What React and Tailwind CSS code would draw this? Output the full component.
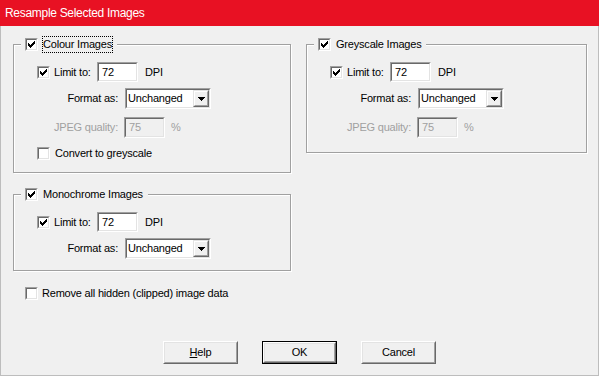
import React from "react";

function CheckBox({ checked }) {
  return (
    <span className="block w-[13px] h-[13px] shrink-0 border border-t-[#a0a0a0] border-l-[#a0a0a0] border-r-white border-b-white">
      <span className="block w-full h-full border border-t-[#696969] border-l-[#696969] border-r-[#e3e3e3] border-b-[#e3e3e3] bg-white">
        {checked && (
          <svg width="9" height="9" viewBox="0 0 9 9" className="block" shapeRendering="crispEdges">
            <path d="M1 3h1v3H1zM2 4h1v3H2zM3 5h1v3H3zM4 4h1v3H4zM5 3h1v3H5zM6 2h1v3H6zM7 1h1v3H7z" fill="#000" />
          </svg>
        )}
      </span>
    </span>
  );
}

function TextBox({ value, disabled, className = "" }) {
  return (
    <div className={"w-[41px] border border-t-[#a0a0a0] border-l-[#a0a0a0] border-r-white border-b-white " + className}>
      <div
        className={
          "h-full flex items-center pl-[3px] border border-t-[#696969] border-l-[#696969] border-r-[#e3e3e3] border-b-[#e3e3e3] " +
          (disabled ? "bg-[#f0f0f0] text-[#a0a0a0]" : "bg-white text-black")
        }
      >
        {value}
      </div>
    </div>
  );
}

function Select({ value, className = "" }) {
  return (
    <div className={"w-[86px] h-[21px] border border-t-[#a0a0a0] border-l-[#a0a0a0] border-r-white border-b-white " + className}>
      <div className="h-full flex bg-white border border-t-[#696969] border-l-[#696969] border-r-[#e3e3e3] border-b-[#e3e3e3]">
        <span className="flex-1 flex items-center pl-px">{value}</span>
        <div className="w-[16px] h-full border border-t-[#e3e3e3] border-l-[#e3e3e3] border-r-[#696969] border-b-[#696969]">
          <div className="h-full flex items-center justify-center bg-[#f0f0f0] border border-t-white border-l-white border-r-[#a0a0a0] border-b-[#a0a0a0]">
            <svg width="7" height="4" viewBox="0 0 7 4" shapeRendering="crispEdges">
              <path d="M0 0h7v1H0zM1 1h5v1H1zM2 2h3v1H2zM3 3h1v1H3z" fill="#000" />
            </svg>
          </div>
        </div>
      </div>
    </div>
  );
}

function Button({ children, isDefault }) {
  return (
    <div className={"w-[75px] h-[23px] " + (isDefault ? "border border-black" : "")}>
      <div className="h-full border border-t-white border-l-white border-r-[#696969] border-b-[#696969]">
        <div className="h-full flex items-center justify-center bg-[#f0f0f0] border border-t-[#e3e3e3] border-l-[#e3e3e3] border-r-[#a0a0a0] border-b-[#a0a0a0]">
          {children}
        </div>
      </div>
    </div>
  );
}

function GroupLegend({ label, focused }) {
  return (
    <legend className="ml-[7px] pl-[4px] pr-[4px] bg-[#f0f0f0]">
      <div className="flex items-center h-[17px]">
        <CheckBox checked />
        <span
          className={
            "ml-[4px] h-[17px] leading-[15px] border border-dotted " +
            (focused ? "border-black" : "border-transparent")
          }
        >
          {label}
        </span>
      </div>
    </legend>
  );
}

function LimitRow() {
  return (
    <div className="flex items-center mt-[9px] ml-[23px] h-[20px]">
      <CheckBox checked />
      <span className="ml-[4px] w-[43px]">Limit to:</span>
      <TextBox value="72" className="h-[20px]" />
      <span className="ml-[7px]">DPI</span>
    </div>
  );
}

function FormatRow() {
  return (
    <div className="flex items-center mt-[6px]">
      <span className="w-[104px] text-right">Format as:</span>
      <Select value="Unchanged" className="ml-[7px]" />
    </div>
  );
}

function JpegRow() {
  return (
    <div className="flex items-center mt-[8px] text-[#a0a0a0]">
      <span className="w-[104px] text-right">JPEG quality:</span>
      <TextBox value="75" disabled className="h-[21px] ml-[6px]" />
      <span className="ml-[6px]">%</span>
    </div>
  );
}

const groupCls =
  "border border-[#a0a0a0] shadow-[inset_1px_1px_0_#fff,1px_1px_0_#fff]";

export default function App() {
  return (
    <div className="w-[599px] h-[376px] flex flex-col bg-[#f0f0f0] text-black text-[11px] tracking-[-0.2px] font-['Liberation_Sans',Arial,sans-serif]">
      <div className="h-[26px] shrink-0 bg-[#e81123] flex items-center pl-[5px] text-white text-[12px] tracking-[-0.3px]">
        Resample Selected Images
      </div>
      <div className="flex-1 flex flex-col border-x border-b border-[#bdbdbd]">
        <div className="flex items-start gap-[15px] pl-[12px] pt-[10px]">
          <div className="w-[278px] flex flex-col">
            <fieldset className={groupCls + " pb-[12px]"}>
              <GroupLegend label="Colour Images" focused />
              <LimitRow />
              <FormatRow />
              <JpegRow />
              <div className="flex items-center mt-[9px] ml-[23px] h-[13px]">
                <CheckBox />
                <span className="ml-[5px]">Convert to greyscale</span>
              </div>
            </fieldset>
            <fieldset className={groupCls + " mt-[13px] pb-[11px]"}>
              <GroupLegend label="Monochrome Images" />
              <LimitRow />
              <FormatRow />
            </fieldset>
            <div className="flex items-center mt-[16px] ml-[12px] h-[13px]">
              <CheckBox />
              <span className="ml-[4px]">Remove all hidden (clipped) image data</span>
            </div>
          </div>
          <fieldset className={groupCls + " w-[281px] pb-[14px]"}>
            <GroupLegend label="Greyscale Images" />
            <LimitRow />
            <FormatRow />
            <JpegRow />
          </fieldset>
        </div>
        <div className="mt-auto pb-[11px] flex justify-center gap-[24px]">
          <Button>
            <span>
              <span className="underline underline-offset-1">H</span>elp
            </span>
          </Button>
          <Button isDefault>OK</Button>
          <Button>Cancel</Button>
        </div>
      </div>
    </div>
  );
}
